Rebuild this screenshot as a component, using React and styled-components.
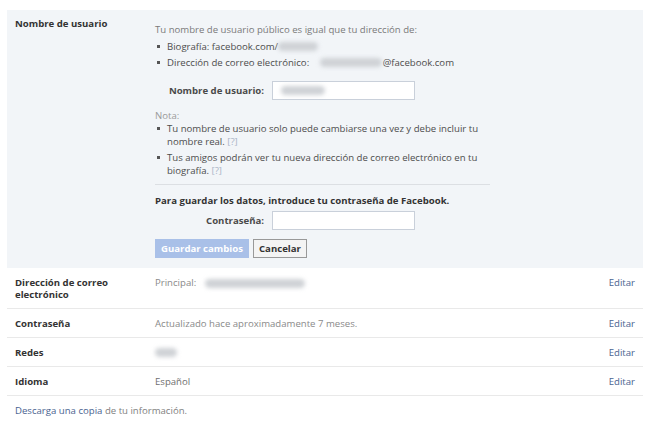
import React from 'react';
import styled, { createGlobalStyle } from 'styled-components';

const GlobalStyle = createGlobalStyle`
  body {
    margin: 0;
    background: #fff;
    font-family: "Open Sans", "DejaVu Sans", sans-serif;
    font-size: 9.6px;
    color: #333;
  }
`;

const Page = styled.div`
  padding: 10px 7px 0 7px;
  width: 636px;
`;

const Row = styled.div`
  display: grid;
  grid-template-columns: 140px 1fr auto;
  padding: ${p => p.$pad || '8px 8px 7px 8px'};
  background: ${p => (p.$open ? '#f2f5f8' : '#fff')};
  border-bottom: 1px solid ${p => (p.$open ? '#f2f5f8' : '#e9e9e9')};
  line-height: ${p => p.$lh || 13}px;
`;

const Label = styled.div`
  font-weight: bold;
  color: #333;
  padding-right: 20px;
`;

const Value = styled.div`
  color: ${p => (p.$dark ? '#6f6f6f' : '#8a8a8a')};
`;

const Edit = styled.a`
  color: #4a6390;
  text-decoration: none;
`;

const Editor = styled.div`
  padding-top: 6px;
  width: 335px;
  color: #7a7a7a;
`;

const Note = styled.div`
  margin-top: 9px;
  color: #9a9a9a;
`;

const List = styled.ul`
  margin: ${p => p.$m || '0'};
  padding: 0 0 0 12px;
  list-style: none;
  color: #4d4d4d;
`;

const Item = styled.li`
  position: relative;
  & + & {
    margin-top: ${p => p.$gap || 0}px;
  }
  &::before {
    content: '';
    position: absolute;
    left: -10px;
    top: 5px;
    width: 3px;
    height: 3px;
    background: #555;
  }
`;

const Help = styled.span`
  color: #a9b4c6;
`;

const Field = styled.div`
  display: grid;
  grid-template-columns: 117px 143px;
  align-items: center;
  margin: ${p => p.$m || '0'};
`;

const FieldLabel = styled.label`
  font-weight: bold;
  color: #4a4a4a;
  text-align: right;
  padding-right: 8px;
`;

const Input = styled.div`
  height: 17px;
  border: 1px solid #c9d0da;
  background: #fff;
  display: flex;
  align-items: center;
  padding-left: 8px;
`;

const Blur = styled.span`
  display: inline-block;
  vertical-align: top;
  width: ${p => p.$w}px;
  height: ${p => p.$h || 9}px;
  margin: ${p => p.$m || '2px 0 0 0'};
  background: #cfd2d6;
  border-radius: 5px;
  filter: blur(2px);
`;

const Divider = styled.hr`
  border: 0;
  border-top: 1px solid #dcdfe3;
  margin: 7px 0 9px 0;
`;

const Strong = styled.div`
  font-weight: bold;
  color: #333;
`;

const Buttons = styled.div`
  display: flex;
  gap: 4px;
  margin-top: 9px;
`;

const Button = styled.button`
  font-family: inherit;
  font-size: 9.6px;
  font-weight: bold;
  height: 19px;
  padding: 0 5px;
  border: 1px solid ${p => (p.$primary ? '#a9c0e8' : '#999')};
  background: ${p => (p.$primary ? '#a9c0e8' : '#f4f4f4')};
  color: ${p => (p.$primary ? '#fff' : '#333')};
`;

const Footer = styled.div`
  padding: 8px 8px;
  line-height: 13px;
  color: #7f7f7f;
  a { color: #4a6390; text-decoration: none; }
`;

const rows = [
  { label: 'Dirección de correo electrónico', value: <>Principal: <Blur $w={100} $m="2px 0 0 6px" /></>, pad: '9px 8px 7px 8px', lh: 12 },
  { label: 'Contraseña', value: 'Actualizado hace aproximadamente 7 meses.' },
  { label: 'Redes', value: <Blur $w={22} /> },
  { label: 'Idioma', value: 'Español', dark: true },
];

export default function App() {
  return (
    <Page>
      <GlobalStyle />
      <Row $open $pad="7px 8px 9px 8px">
        <Label>Nombre de usuario</Label>
        <Editor>
          <div>Tu nombre de usuario público es igual que tu dirección de:</div>
          <List $m="4px 0 0 0">
            <Item>Biografía: facebook.com/<Blur $w={40} /></Item>
            <Item>Dirección de correo electrónico: <Blur $w={62} $m="2px 1px 0 8px" />@facebook.com</Item>
          </List>
          <Field $m="12px 0 0 0">
            <FieldLabel>Nombre de usuario:</FieldLabel>
            <Input><Blur $w={44} $m="0" /></Input>
          </Field>
          <Note>Nota:</Note>
          <List>
            <Item $gap={3}>Tu nombre de usuario solo puede cambiarse una vez y debe incluir tu nombre real. <Help>[?]</Help></Item>
            <Item $gap={3}>Tus amigos podrán ver tu nueva dirección de correo electrónico en tu biografía. <Help>[?]</Help></Item>
          </List>
          <Divider />
          <Strong>Para guardar los datos, introduce tu contraseña de Facebook.</Strong>
          <Field $m="4px 0 0 0">
            <FieldLabel>Contraseña:</FieldLabel>
            <Input />
          </Field>
          <Buttons>
            <Button $primary>Guardar cambios</Button>
            <Button>Cancelar</Button>
          </Buttons>
        </Editor>
        <div />
      </Row>
      {rows.map(r => (
        <Row key={r.label} $pad={r.pad} $lh={r.lh}>
          <Label>{r.label}</Label>
          <Value $dark={r.dark}>{r.value}</Value>
          <Edit href="#">Editar</Edit>
        </Row>
      ))}
      <Footer>
        <a href="#">Descarga una copia</a> de tu información.
      </Footer>
    </Page>
  );
}
